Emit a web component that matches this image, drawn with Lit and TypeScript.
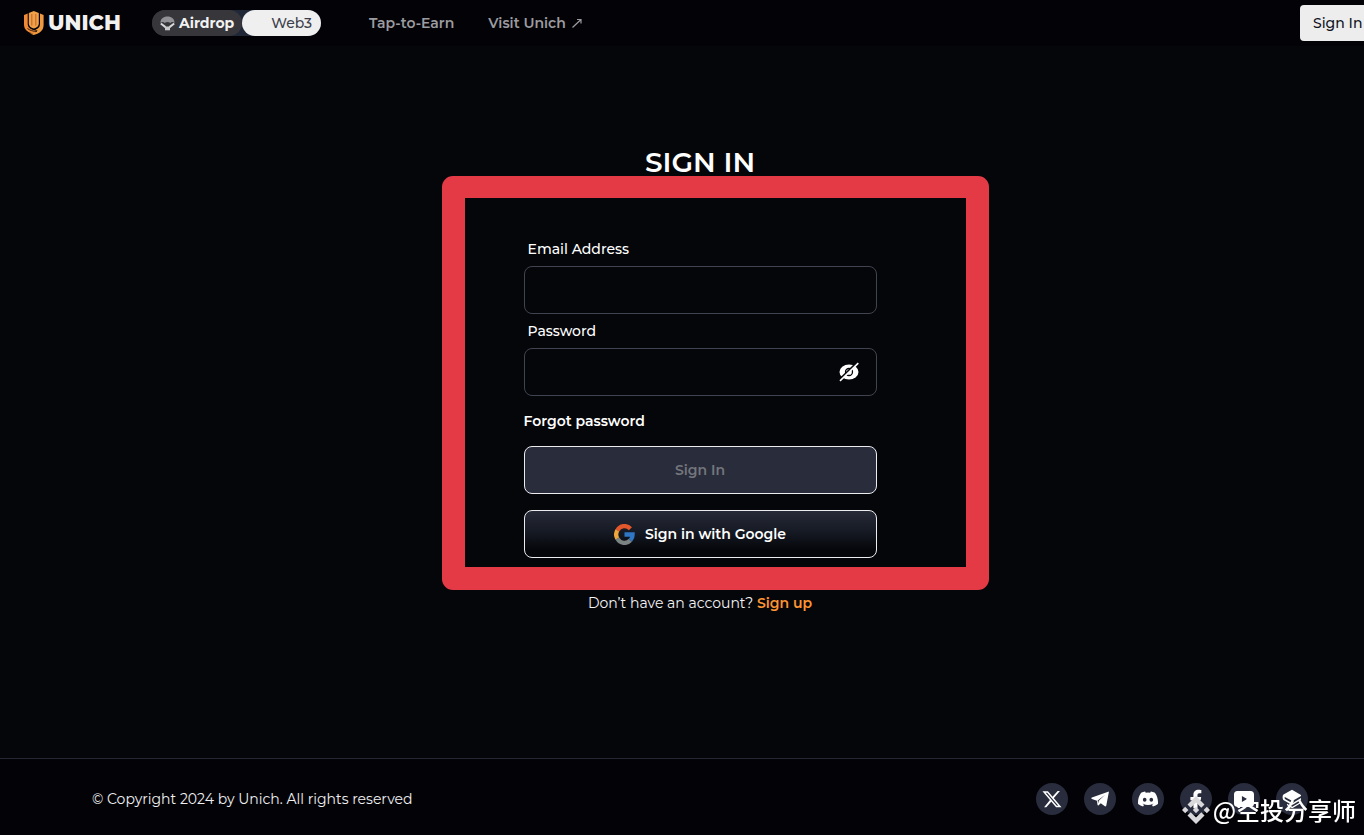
import { LitElement, html, css, svg } from "lit";
import { customElement, state } from "lit/decorators.js";

const socials = [
  {
    name: "X",
    icon: svg`<path d="M2.500 3.500h4.200L21.500 21h-4.200Z" fill="none" stroke="currentColor" stroke-width="1.800"/><path d="M18.800 2.500h2.700l-7.700 8.800-1.500-1.800ZM9.800 13l1.500 1.900L5.200 22H2.500Z"/>`,
  },
  {
    name: "Telegram",
    icon: svg`<path d="M21.800 3.200c.5-.2 1 .2.800.8l-3.100 16c-.2.800-1 1.100-1.600.7l-5-3.700-2.500 2.500c-.5.500-1.300.2-1.400-.5L8.300 14 2.300 12c-.9-.3-.9-1.400 0-1.800L21.800 3.200ZM9.200 13.800l.6 3.400.7-3.100 7.700-7.300-9 7Z" fill-rule="evenodd"/>`,
  },
  {
    name: "Discord",
    icon: svg`<path d="M20.300 4.400A19.800 19.800 0 0 0 15.400 2.900l-.8 1.500a18 18 0 0 0-5.300 0l-.8-1.500c-1.700.3-3.300.8-4.800 1.500C.6 8.900-.3 13.500.1 18a20 20 0 0 0 6 3l1.300-2.100c-.7-.2-1.300-.5-1.900-.9l.5-.3a14.300 14.300 0 0 0 12.100 0l.4.300c-.6.400-1.200.7-1.900.9l1.300 2.100a20 20 0 0 0 6-3c.5-5.200-.8-9.700-3.600-13.600ZM8 15.300c-1.200 0-2.100-1.100-2.100-2.400s.9-2.400 2.100-2.400 2.200 1.100 2.200 2.400-1 2.400-2.200 2.400Zm8 0c-1.200 0-2.200-1.100-2.200-2.400s1-2.400 2.200-2.400 2.100 1.100 2.100 2.400-.9 2.400-2.100 2.400Z"/>`,
  },
  {
    name: "Facebook",
    icon: svg`<path d="M13.800 23V13.600h3.800l.6-4h-4.400V7.400c0-1.200.5-2.200 2.300-2.200h2.300V1.200s-1.600-.3-3.200-.3c-3.700 0-6.300 2-6.300 5.900v2.800H5.300v4h3.600V23h4.900Z"/>`,
  },
  {
    name: "YouTube",
    icon: svg`<path d="M4 2.500h16c2.500 0 4 1.500 4 4v11c0 2.500-1.500 4-4 4H4c-2.500 0-4-1.500-4-4v-11c0-2.500 1.500-4 4-4Zm5.500 5.800v7.400l6.200-3.700-6.200-3.700Z" fill-rule="evenodd"/>`,
  },
  {
    name: "Docs",
    icon: svg`<path d="M12 1 1.800 6.700C.6 7.600.5 10.500 1 12c.2.900.9 1.400 1.600 1.800l8.400 4.700c.8.400 1.500.4 2.300 0l9.500-5.600v-2.100L12.500 17 4 12.200c-1-.7-1-1.700-.6-2.700l9 5L22.800 8.300v-1L12 1Zm10.800 14.200L12.300 21.300 6 17.700v1.800l5 2.900c.8.500 1.600.5 2.400 0l9.400-5.500v-1.700Z"/>`,
  },
];

@customElement("app-root")
export class AppRoot extends LitElement {
  @state() private passwordVisible = false;

  static styles = css`
    :host {
      display: block;
      overflow: hidden;
      background: #05060a;
      color: #fff;
      font: 500 14px/20px Montserrat, Inter, sans-serif;
    }
    * {
      box-sizing: border-box;
    }
    a {
      color: inherit;
      text-decoration: none;
    }
    button,
    input {
      font: inherit;
      color: inherit;
    }
    button {
      cursor: pointer;
    }
    svg {
      display: block;
      flex: none;
    }
    .page {
      display: flex;
      flex-direction: column;
      min-width: 1400px;
      min-height: 100vh;
    }
    .header {
      display: flex;
      align-items: center;
      justify-content: space-between;
      height: 46px;
      padding: 0 24px;
      background: #030307;
    }
    .left,
    .nav,
    .brand,
    .switch,
    .tab {
      display: flex;
      align-items: center;
    }
    .brand {
      gap: 4px;
      width: 128px;
      color: #f1f1f1;
      font-size: 21px;
      line-height: 24px;
      font-weight: 800;
    }
    .switch {
      border-radius: 13px;
      background: #202838;
    }
    .tab {
      height: 26px;
      border-radius: 13px;
      font-size: 14px;
    }
    .tab.airdrop {
      gap: 4px;
      width: 90px;
      padding-left: 8px;
      background: #37363b;
      color: #f2f2f2;
      font-weight: 700;
    }
    .tab.web {
      justify-content: flex-end;
      width: 79px;
      padding-right: 9px;
      background: #efeff0;
      color: #3d3f4b;
    }
    .nav {
      gap: 34px;
      margin-left: 48px;
      color: #9c9ca0;
      font-weight: 600;
    }
    .visit {
      display: flex;
      align-items: center;
      gap: 6px;
    }
    .login {
      height: 36px;
      padding: 0 13px;
      margin-right: -12px;
      border: 0;
      border-radius: 4px;
      width: 88px;
      text-align: left;
      background: #ededed;
      color: #11131d;
    }
    .main {
      flex: 1;
      padding: 99px 0 48px;
    }
    .card {
      position: relative;
      width: 353px;
      margin: 0 auto;
    }
    .title {
      margin: 0 0 60px;
      text-align: center;
      font-size: 28px;
      line-height: 34px;
      font-weight: 600;
    }
    .label {
      display: block;
      padding-left: 4px;
      margin-bottom: 7px;
    }
    .field {
      position: relative;
      margin-bottom: 7px;
    }
    .input {
      display: block;
      width: 100%;
      height: 48px;
      padding: 0 16px;
      border: 1px solid #414350;
      border-radius: 8px;
      background: transparent;
      outline: none;
    }
    .input.secret {
      padding-right: 48px;
    }
    .eye {
      position: absolute;
      right: 16px;
      top: 12px;
      padding: 2px;
      border: 0;
      background: none;
    }
    .forgot {
      display: block;
      margin: 15px 0;
      font-weight: 600;
    }
    .btn {
      display: flex;
      align-items: center;
      justify-content: center;
      gap: 10px;
      width: 100%;
      height: 48px;
      margin-bottom: 16px;
      border: 1px solid #ececee;
      border-radius: 8px;
      font-weight: 600;
    }
    .btn.submit {
      background: #282c3b;
      color: #74767b;
    }
    .btn.google {
      background: linear-gradient(#272a37, #161a24 45%, #05060a 85%);
      margin-bottom: 35px;
    }
    .signup {
      margin: 0;
      text-align: center;
      color: #f4f4f6;
      font-weight: 400;
    }
    .signup a {
      color: #ff9432;
      font-weight: 600;
    }
    .frame {
      position: absolute;
      top: 31px;
      left: -82px;
      right: -112px;
      height: 414px;
      border: 23px solid #e43a46;
      border-top-width: 22px;
      border-radius: 11px;
      pointer-events: none;
    }
    .footer {
      display: flex;
      align-items: center;
      justify-content: space-between;
      padding: 24px 92px 20px;
      border-top: 1px solid #252732;
      background: #030307;
      color: #f0f0f2;
      font-weight: 400;
    }
    .socials {
      display: flex;
      gap: 16px;
    }
    .social {
      display: grid;
      place-items: center;
      width: 32px;
      height: 32px;
      border-radius: 50%;
      background: #282c3c;
      color: #fff;
    }
    .mark {
      position: fixed;
      right: 8px;
      bottom: 7px;
      display: flex;
      align-items: center;
      gap: 3px;
      font: 500 24px/36px "Noto Sans CJK SC", sans-serif;
      pointer-events: none;
    }
  `;

  render() {
    return html`
      <div class="page">
        <header class="header">
          <div class="left">
            <a class="brand" href="#">
              <svg width="20" height="24" viewBox="0 0 20 24" aria-hidden="true">
                <path d="M0 4 3.700 2.400V13c0 3 1.800 4.600 4.800 5.700l5 1.300c-1 1.600-2.300 2.400-4 2.600C3.500 21.500 0 18.500 0 13.500Z" fill="#f08a35" />
                <path d="M4.800 2 7.300 1 9.800 0l2.500 1 2.500 1v10.500c0 2.500-2 4.300-5 5-3-.7-5-2.500-5-5Z" fill="#f2a048" />
                <path d="M7.800 3v11.500M11.800 3v11.500" stroke="#a85a22" stroke-width=".8" />
                <path d="M16 2.400 19.600 4v10c0 5-3.500 8.500-9.800 9.900l-4-1.400c4.500-.2 7-1 7.700-3l-2.200-.8c3.200-1 4.700-3 4.700-5.700Z" fill="#f09a40" />
                <path d="M3.500 17.500c2.500 2 5.500 2.800 9.500 3" stroke="#05060a" stroke-width=".8" fill="none" />
              </svg>
              UNICH
            </a>
            <div class="switch">
              <a class="tab airdrop" href="#">
                <svg width="15" height="15" viewBox="0 0 15 15" aria-hidden="true">
                  <path d="M.5 7C.3 3 3.400.6 7.500.6S14.700 3 14.500 7C13 5.800 11.500 5.800 10.300 7c-1.600-1.300-4-1.300-5.600 0C3.500 5.800 2 5.800.5 7Z" fill="#929296" />
                  <path d="m.8 7.500 4.700 3.600M14.200 7.500l-4.700 3.600" stroke="#d8d8da" stroke-width="2" />
                  <path d="M5 10.500h5v3.800H5Z" fill="#c9c9cb" />
                </svg>
                Airdrop
              </a>
              <a class="tab web" href="#">Web3</a>
            </div>
            <nav class="nav">
              <a href="#">Tap-to-Earn</a>
              <a class="visit" href="#">
                Visit Unich
                <svg width="10" height="10" viewBox="0 0 10 10" fill="none" stroke="currentColor" stroke-width="1.200" aria-hidden="true">
                  <path d="M.5 9.500 9 1.500M5 1.500h4v4" />
                </svg>
              </a>
            </nav>
          </div>
          <button class="login" type="button">Sign In</button>
        </header>

        <main class="main">
          <form class="card" @submit=${(e: Event) => e.preventDefault()}>
            <h1 class="title">SIGN IN</h1>
            <label class="label" for="email">Email Address</label>
            <div class="field"><input class="input" id="email" type="email" /></div>
            <label class="label" for="password">Password</label>
            <div class="field">
              <input class="input secret" id="password" type=${this.passwordVisible ? "text" : "password"} />
              <button
                class="eye"
                type="button"
                aria-label="Toggle password visibility"
                @click=${() => (this.passwordVisible = !this.passwordVisible)}
              >
                <svg width="20" height="20" viewBox="0 0 20 20" fill="none">
                  <ellipse cx="10" cy="10" rx="9.500" ry="7.500" fill="#fff" />
                  <circle cx="10" cy="10" r="3.500" stroke="#05060a" stroke-width="1.300" />
                  <circle cx="10" cy="10" r="1.500" fill="#fff" />
                  <path d="M1 17.300 18 1" stroke="#05060a" stroke-width="2.500" />
                  <path d="M1 18.800 19.300 1.200" stroke="#fff" stroke-width="1.600" />
                </svg>
              </button>
            </div>
            <a class="forgot" href="#">Forgot password</a>
            <button class="btn submit" type="submit" disabled>Sign In</button>
            <button class="btn google" type="button">
              <svg width="21" height="21" viewBox="0 0 22 22" fill="none" stroke-width="4.500" aria-hidden="true">
                <path d="M3.500 6.700A8.500 8.500 0 0 1 17.200 4.900" stroke="#e2572b" />
                <path d="M3.500 15.300a8.500 8.500 0 0 1 0-8.600" stroke="#eda63b" />
                <path d="M17.200 17.100A8.500 8.500 0 0 1 3.500 15.300" stroke="#7b8483" />
                <path d="M11 11h8.500a8.500 8.500 0 0 1-2.300 6.100" stroke="#2f76c4" />
              </svg>
              Sign in with Google
            </button>
            <p class="signup">Don’t have an account? <a href="#">Sign up</a></p>
            <div class="frame"></div>
          </form>
        </main>

        <footer class="footer">
          <span>© Copyright 2024 by Unich. All rights reserved</span>
          <div class="socials">
            ${socials.map(
              (s) => html`
                <a class="social" href="#" aria-label=${s.name}>
                  <svg width="20" height="20" viewBox="0 0 24 24" fill="currentColor">${s.icon}</svg>
                </a>
              `
            )}
          </div>
        </footer>
      </div>
      <div class="mark">
        <svg width="28" height="28" viewBox="0 0 28 28" fill="#d9d9dc" aria-hidden="true">
          <path d="m14 0 8.500 8.500-3.200 3.200L14 6.400l-5.300 5.300-3.200-3.200ZM14 28l8.500-8.500-3.200-3.200-5.300 5.300-5.300-5.300-3.200 3.200ZM3.200 10.800 6.400 14l-3.200 3.200L0 14ZM24.800 10.800 28 14l-3.200 3.200-3.200-3.200ZM14 10.800l3.200 3.200-3.200 3.200-3.200-3.200Z" />
        </svg>
        <span>@空投分享师</span>
      </div>
    `;
  }
}
